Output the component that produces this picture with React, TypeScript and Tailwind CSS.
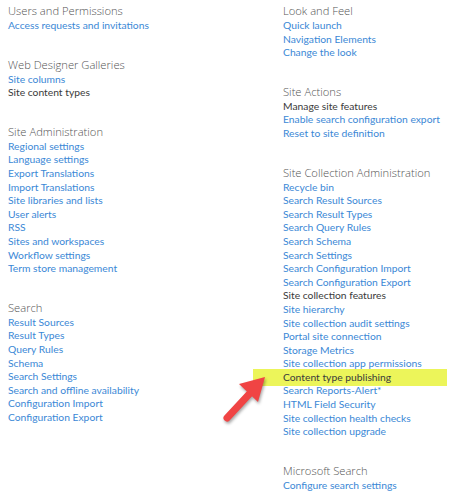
import React from 'react';

type Item = { label: string; plain?: boolean; marked?: boolean };
type Section = { title: string; items: Item[] };

const left: Section[] = [
  { title: 'Users and Permissions', items: [{ label: 'Access requests and invitations' }] },
  {
    title: 'Web Designer Galleries',
    items: [{ label: 'Site columns' }, { label: 'Site content types', plain: true }],
  },
  {
    title: 'Site Administration',
    items: [
      { label: 'Regional settings' },
      { label: 'Language settings' },
      { label: 'Export Translations' },
      { label: 'Import Translations' },
      { label: 'Site libraries and lists' },
      { label: 'User alerts' },
      { label: 'RSS' },
      { label: 'Sites and workspaces' },
      { label: 'Workflow settings' },
      { label: 'Term store management' },
    ],
  },
  {
    title: 'Search',
    items: [
      { label: 'Result Sources' },
      { label: 'Result Types' },
      { label: 'Query Rules' },
      { label: 'Schema' },
      { label: 'Search Settings' },
      { label: 'Search and offline availability' },
      { label: 'Configuration Import' },
      { label: 'Configuration Export' },
    ],
  },
];

const right: Section[] = [
  {
    title: 'Look and Feel',
    items: [{ label: 'Quick launch' }, { label: 'Navigation Elements' }, { label: 'Change the look' }],
  },
  {
    title: 'Site Actions',
    items: [
      { label: 'Manage site features', plain: true },
      { label: 'Enable search configuration export' },
      { label: 'Reset to site definition' },
    ],
  },
  {
    title: 'Site Collection Administration',
    items: [
      { label: 'Recycle bin' },
      { label: 'Search Result Sources' },
      { label: 'Search Result Types' },
      { label: 'Search Query Rules' },
      { label: 'Search Schema' },
      { label: 'Search Settings' },
      { label: 'Search Configuration Import' },
      { label: 'Search Configuration Export' },
      { label: 'Site collection features', plain: true },
      { label: 'Site hierarchy' },
      { label: 'Site collection audit settings' },
      { label: 'Portal site connection' },
      { label: 'Storage Metrics' },
      { label: 'Site collection app permissions' },
      { label: 'Content type publishing', plain: true, marked: true },
      { label: 'Search Reports-Alert*' },
      { label: 'HTML Field Security' },
      { label: 'Site collection health checks' },
      { label: 'Site collection upgrade' },
    ],
  },
  { title: 'Microsoft Search', items: [{ label: 'Configure search settings' }] },
];

function Column({ sections }: { sections: Section[] }) {
  return (
    <div className="flex flex-col gap-[24px]">
      {sections.map((s) => (
        <div key={s.title}>
          <div className="whitespace-nowrap font-['Open_Sans',sans-serif] text-[11.2px] leading-[16px] font-light text-[#555]">
            {s.title}
          </div>
          <ul>
            {s.items.map((it) => (
              <li
                key={it.label}
                className={
                  'relative text-[10.3px] leading-[13.6px] whitespace-nowrap ' +
                  (it.plain ? 'text-[#3a3a3a]' : 'text-[#3b88d6]')
                }
              >
                {it.marked && (
                  <div className="absolute left-[-30px] w-[194px] top-[-2px] h-[17px] bg-[#ecf55a]" />
                )}
                <span className="relative">{it.label}</span>
              </li>
            ))}
          </ul>
        </div>
      ))}
    </div>
  );
}

export default function App() {
  return (
    <div className="relative w-[450px] h-[500px] bg-white overflow-hidden font-['Lato',sans-serif]">
      <div className="grid grid-cols-[275px_1fr] pl-2 pt-[3px]">
        <Column sections={left} />
        <Column sections={right} />
      </div>
      <svg
        className="absolute left-[219px] top-[370px] drop-shadow-[1px_2px_1.5px_rgba(0,0,0,0.35)]"
        width="52"
        height="56"
        viewBox="0 0 52 56"
      >
        <line x1="34" y1="20" x2="8" y2="48" stroke="#f04444" strokeWidth="7" strokeLinecap="round" />
        <polygon points="46,7 20,14 39,32" fill="#f04444" />
      </svg>
    </div>
  );
}
